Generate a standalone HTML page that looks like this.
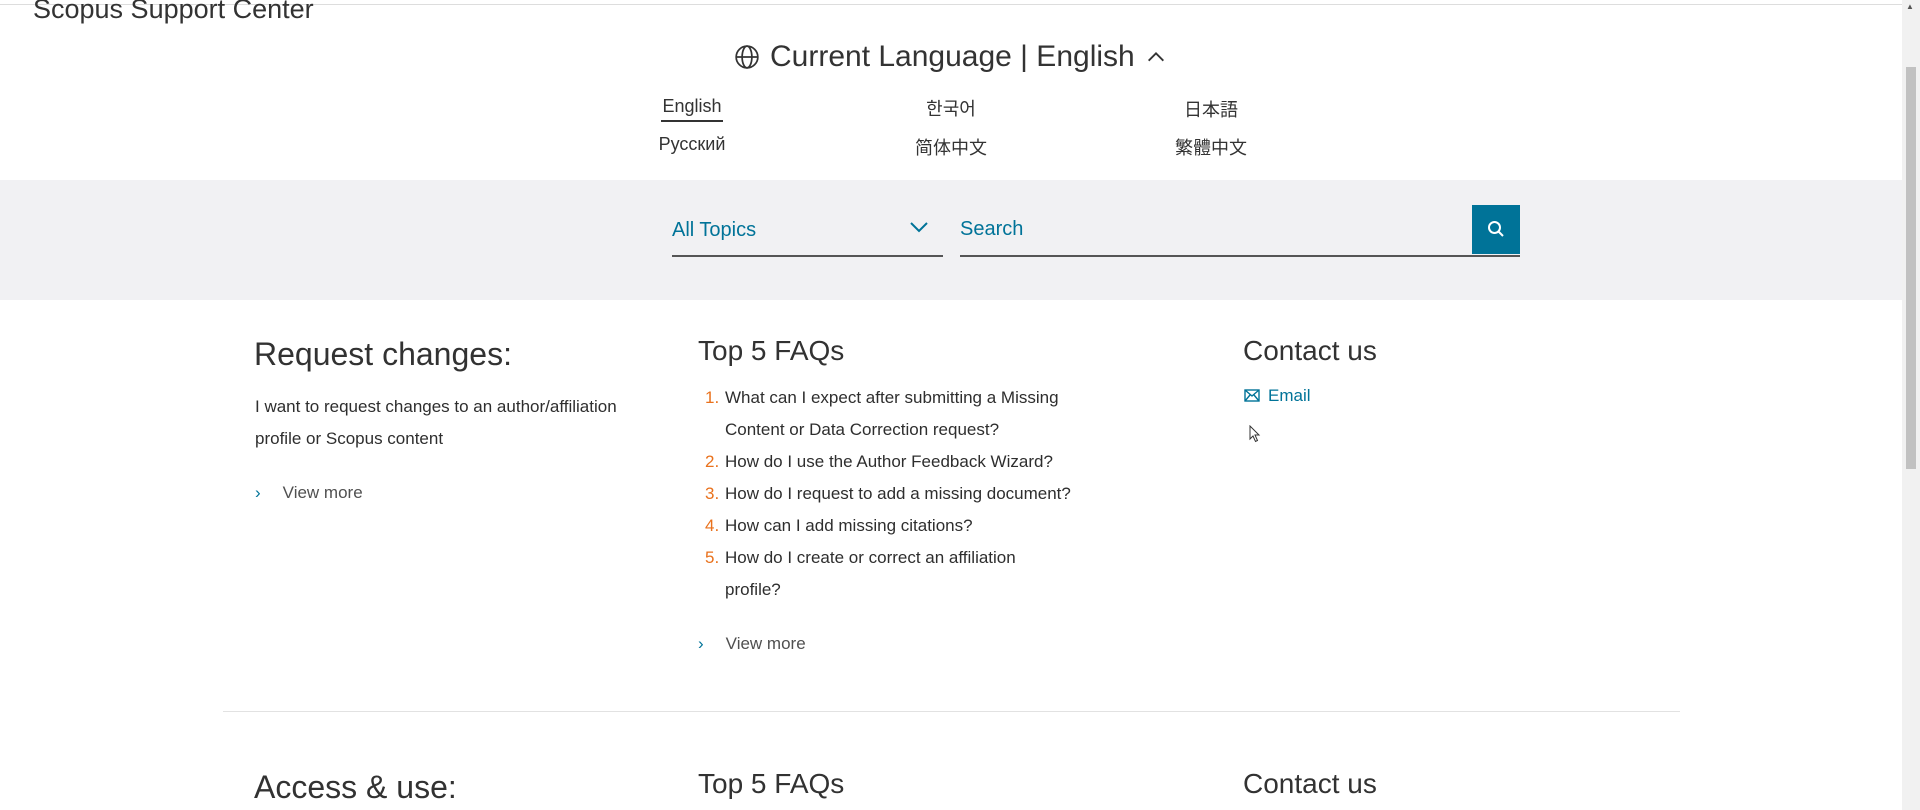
<!DOCTYPE html>
<html><head><meta charset="utf-8"><style>
*{margin:0;padding:0;box-sizing:border-box}
body{width:1920px;height:810px;overflow:hidden;background:#fff;font-family:"Liberation Sans","Noto Sans CJK JP",sans-serif;color:#2e2e2e;position:relative}
.a{position:absolute;white-space:nowrap}
.topline{position:absolute;left:0;top:4px;width:1902px;height:1px;background:#ddd}
.band{position:absolute;left:0;top:180px;width:1902px;height:120px;background:#f1f1f3}
.sb{position:absolute;left:1902px;top:0;width:18px;height:810px;background:#f1f1f1}
.thumb{position:absolute;left:1906px;top:67px;width:10px;height:402px;background:#c1c1c1}
.lang{font-size:18px;color:#333;transform:translateX(-50%)}
.h{font-size:28px;color:#323232}
.p{font-size:17px;line-height:32px;color:#2e2e2e}
ol{list-style:none}
.n{color:#e9711c;display:inline-block;width:20px;margin-left:-20px}
.vm{font-size:17px;color:#505050}
.vm span{color:#007398;margin-right:22px;font-size:17px}
</style></head><body>
<div class="topline"></div>
<div class="a" style="left:33px;top:-6px;font-size:27px;color:#333">Scopus Support Center</div>
<div class="sb"></div><div class="thumb"></div>
<div class="a" style="left:1906px;top:2px;font-size:8px;color:#555">▲</div>

<div class="a" style="left:734px;top:40px;font-size:30px;color:#333;display:flex;align-items:center">
<svg width="26" height="26" viewBox="0 0 24 24" fill="none" stroke="#333" stroke-width="1.6" style="margin-right:10px"><circle cx="12" cy="12" r="10"/><ellipse cx="12" cy="12" rx="4.5" ry="10"/><line x1="2" y1="12" x2="22" y2="12"/></svg>
Current Language | English
<svg width="22" height="22" viewBox="0 0 24 24" fill="none" stroke="#333" stroke-width="2" style="margin-left:10px"><path d="M4 16 L12 8 L20 16"/></svg>
</div>

<div class="a lang" style="left:692px;top:96px">English</div>
<div class="a" style="left:661px;top:120px;width:62px;height:2px;background:#333"></div>
<div class="a lang" style="left:951px;top:95px">한국어</div>
<div class="a lang" style="left:1211px;top:96px">日本語</div>
<div class="a lang" style="left:692px;top:134px">Русский</div>
<div class="a lang" style="left:951px;top:134px">简体中文</div>
<div class="a lang" style="left:1211px;top:134px">繁體中文</div>

<div class="band"></div>
<div class="a" style="left:672px;top:219px;font-size:20px;color:#007398">All Topics</div>
<svg class="a" style="left:909px;top:220px" width="20" height="14" viewBox="0 0 20 14" fill="none" stroke="#007398" stroke-width="2"><path d="M2 3 L10 11 L18 3"/></svg>
<div class="a" style="left:672px;top:255px;width:271px;height:2px;background:#555"></div>
<div class="a" style="left:960px;top:218px;font-size:20px;color:#007398">Search</div>
<div class="a" style="left:960px;top:255px;width:560px;height:2px;background:#555"></div>
<div class="a" style="left:1472px;top:205px;width:48px;height:49px;background:#007398"></div>
<svg class="a" style="left:1486px;top:219px" width="20" height="20" viewBox="0 0 20 20" fill="none" stroke="#fff" stroke-width="2"><circle cx="8.5" cy="8.5" r="5.5"/><path d="M12.5 12.5 L17 17"/></svg>

<div class="a h" style="left:254px;top:336px;font-size:32px">Request changes:</div>
<div class="a p" style="left:255px;top:391px">I want to request changes to an author/affiliation<br>profile or Scopus content</div>
<div class="a vm" style="left:255px;top:483px"><span>›</span>View more</div>

<div class="a h" style="left:698px;top:335px">Top 5 FAQs</div>
<ol class="a p" style="left:725px;top:382px">
<li><span class="n">1.</span>What can I expect after submitting a Missing</li>
<li>Content or Data Correction request?</li>
<li><span class="n">2.</span>How do I use the Author Feedback Wizard?</li>
<li><span class="n">3.</span>How do I request to add a missing document?</li>
<li><span class="n">4.</span>How can I add missing citations?</li>
<li><span class="n">5.</span>How do I create or correct an affiliation</li>
<li>profile?</li>
</ol>
<div class="a vm" style="left:698px;top:634px"><span>›</span>View more</div>

<div class="a h" style="left:1243px;top:335px">Contact us</div>
<svg class="a" style="left:1244px;top:389px" width="16" height="13" viewBox="0 0 16 13" fill="none" stroke="#007398" stroke-width="1.4"><rect x="1" y="1" width="14" height="11"/><path d="M1 1 L8 7 L15 1 M1 12 L6 6 M15 12 L10 6"/></svg>
<div class="a" style="left:1268px;top:386px;font-size:17px;color:#007398">Email</div>
<svg class="a" style="left:1249px;top:425px" width="12" height="18" viewBox="0 0 12 18"><path d="M1 1 L1 14 L4 11 L6.5 16.5 L8.5 15.5 L6 10 L10 10 Z" fill="#fff" stroke="#333" stroke-width="1"/></svg>

<div class="a" style="left:223px;top:711px;width:1457px;height:1px;background:#e2e2e2"></div>
<div class="a h" style="left:254px;top:769px;font-size:32px">Access &amp; use:</div>
<div class="a h" style="left:698px;top:768px">Top 5 FAQs</div>
<div class="a h" style="left:1243px;top:768px">Contact us</div>
</body></html>
